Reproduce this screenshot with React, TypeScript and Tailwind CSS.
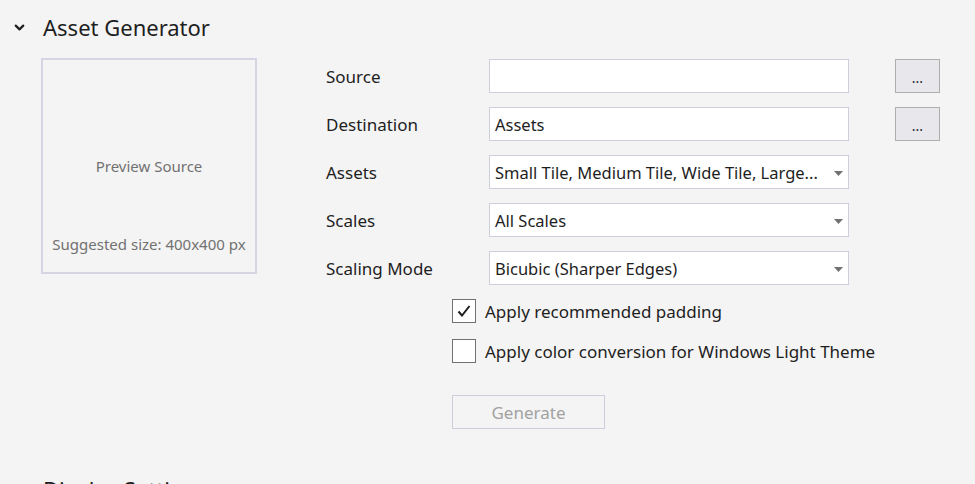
import { ChevronDown } from "lucide-react";

const font = { fontFamily: '"Noto Sans", "Open Sans", sans-serif' };

const rows = [
  { label: "Source", kind: "text", value: "", browse: true },
  { label: "Destination", kind: "text", value: "Assets", browse: true },
  { label: "Assets", kind: "select", value: "Small Tile, Medium Tile, Wide Tile, Large..." },
  { label: "Scales", kind: "select", value: "All Scales" },
  { label: "Scaling Mode", kind: "select", value: "Bicubic (Sharper Edges)" },
];

function Field({ row }: { row: (typeof rows)[number] }) {
  return (
    <div className="flex h-[34px] items-center">
      <div className="w-[163px] pt-[2px] text-[17px] leading-[24px] text-[#1e1e1e]">{row.label}</div>
      <div className="flex h-[34px] w-[360px] items-center border border-[#ccceDB] bg-white pl-[5px] pr-[5px] pt-[2px] text-[16.5px] leading-[24px] text-[#1e1e1e]">
        <span className="flex-1 overflow-hidden whitespace-nowrap">{row.value}</span>
        {row.kind === "select" && (
          <svg width="9" height="5" viewBox="0 0 9 5" className="ml-[6px] shrink-0">
            <path d="M0 0h9L4.5 5z" fill="#717171" />
          </svg>
        )}
      </div>
      {row.browse && (
        <button className="ml-[46px] flex h-[34px] w-[45px] items-center justify-center border border-[#adadad] bg-[#e8e8ec] pt-[2px] text-[14px] text-[#1e1e1e]">
          ...
        </button>
      )}
    </div>
  );
}

function Check({ checked, label }: { checked?: boolean; label: string }) {
  return (
    <div className="flex h-[24px] items-center gap-[9px]">
      <div className="flex h-[24px] w-[24px] items-center justify-center border border-[#717171] bg-white">
        {checked && (
          <svg width="14" height="12" viewBox="0 0 14 12">
            <path d="M1.5 6.5l3.5 4L12.5 1" fill="none" stroke="#1e1e1e" strokeWidth="2" />
          </svg>
        )}
      </div>
      <span className="pt-[2px] text-[17px] leading-[24px] text-[#1e1e1e]">{label}</span>
    </div>
  );
}

export default function App() {
  return (
    <div className="h-[484px] w-[975px] overflow-hidden bg-[#f4f4f4]" style={font}>
      <div className="flex h-[32px] items-center mt-[11px]">
        <ChevronDown className="ml-[12px] size-[15px] text-[#1e1e1e]" strokeWidth={3.5} />
        <h2 className="ml-[16px] text-[22px] leading-[32px] text-[#1e1e1e]">Asset Generator</h2>
      </div>

      <div className="mt-[15px] flex items-start">
        <div className="ml-[41px] flex h-[216px] w-[216px] flex-col items-center border-2 border-[#d4d4e2] text-[15px] text-[#717171]">
          <div className="mt-[95px]">Preview Source</div>
          <div className="mt-auto mb-[17px]">Suggested size: 400x400 px</div>
        </div>

        <div className="ml-[69px] mt-[1px] flex flex-col">
          <div className="flex flex-col gap-[14px]">
            {rows.map((r) => (
              <Field key={r.label} row={r} />
            ))}
          </div>
          <div className="ml-[126px] mt-[14px] flex flex-col gap-[16px]">
            <Check checked label="Apply recommended padding" />
            <Check label="Apply color conversion for Windows Light Theme" />
          </div>
          <button className="ml-[126px] mt-[32px] h-[34px] w-[153px] border border-[#ccceDB] pt-[2px] text-[17px] leading-[24px] text-[#a2a2a2]">
            Generate
          </button>
        </div>
      </div>

      <div className="ml-[43px] mt-[44px] h-[32px] text-[22px] leading-[32px] text-[#1e1e1e]">Display Settings</div>
    </div>
  );
}
